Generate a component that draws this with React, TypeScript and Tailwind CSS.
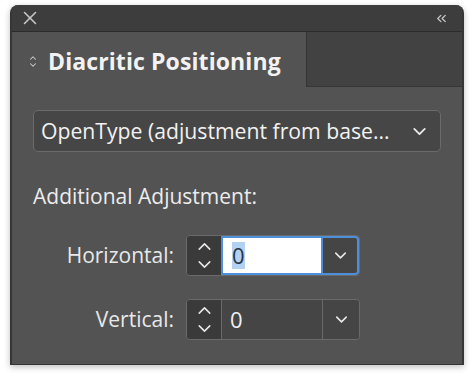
import { ChevronDown, ChevronUp, ChevronsLeft, X } from "lucide-react";

type SpinFieldProps = {
  label: string;
  value: string;
  focused?: boolean;
};

function SpinField({ label, value, focused }: SpinFieldProps) {
  return (
    <div className="flex items-center">
      <span className="w-[153px] pr-[12px] text-right text-[21px] leading-none text-[#e8e8e8]">{label}</span>
      <div className="flex h-[41px] w-[174px] overflow-hidden rounded-[4px] border border-[#6a6a6a]">
        <div className="flex w-[34px] flex-col items-center justify-center bg-[#3a3a3a] text-[#e6e6e6]">
          <ChevronUp size={21} strokeWidth={1.8} className="-mb-[3px]" />
          <ChevronDown size={21} strokeWidth={1.8} />
        </div>
        {focused ? (
          <div className="flex w-[102px] items-center border-2 border-[#4e8fdb] bg-white pl-[9px] text-[22px] text-[#283544]">
            <span className="bg-[#b3d1f2] leading-[27px]">{value}</span>
          </div>
        ) : (
          <div className="flex w-[102px] items-center border-x border-[#6a6a6a] bg-[#454545] pl-[8px] text-[22px] text-[#f0f0f0]">
            {value}
          </div>
        )}
        <div
          className={
            focused
              ? "flex flex-1 items-center justify-center rounded-r-[4px] border-y-2 border-r-2 border-[#4e8fdb] bg-[#454545] text-[#e6e6e6]"
              : "flex flex-1 items-center justify-center bg-[#454545] text-[#e6e6e6]"
          }
        >
          <ChevronDown size={19} strokeWidth={2} />
        </div>
      </div>
    </div>
  );
}

export default function App() {
  return (
    <div className="h-[382px] w-[474px] bg-white pl-[10px] pt-[5px] font-['Open_Sans',sans-serif]">
      <div className="flex h-[360px] w-[454px] flex-col overflow-hidden rounded-t-[8px] border-x-2 border-b border-[#363636] bg-[#535353] shadow-[0_2px_6px_rgba(0,0,0,0.25)]">
        <div className="flex h-[27px] shrink-0 items-center justify-between border-b border-[#2c2c2c] bg-[#3d3d3d] pl-[7px] pr-[13px] text-[#c8c8c8]">
          <X size={22} strokeWidth={1.7} />
          <ChevronsLeft size={15} strokeWidth={2.2} className="text-[#c4c4c4]" />
        </div>
        <div className="flex h-[55px] shrink-0">
          <div className="flex w-[294px] items-center gap-[10px] bg-[#535353] pl-[16px] pt-[3px]">
            <div className="flex flex-col items-center text-[#cfcfcf]">
              <ChevronUp size={10} strokeWidth={2.5} className="-mb-[3px]" />
              <ChevronDown size={10} strokeWidth={2.5} />
            </div>
            <span className="text-[23px] font-bold tracking-[0.1px] text-[#f2f2f2]">Diacritic Positioning</span>
          </div>
          <div className="flex-1 border-b border-l border-[#353535] bg-[#424242]" />
        </div>
        <div className="flex flex-col px-[21px] pt-[23px]">
          <div className="flex h-[42px] items-center justify-between rounded-[5px] border border-[#6b6b6b] bg-[#464646] pl-[7px] pr-[10px]">
            <span className="text-[21.2px] text-[#f2f2f2]">OpenType (adjustment from base...</span>
            <ChevronDown size={21} strokeWidth={2} className="text-[#ececec]" />
          </div>
          <div className="mt-[30px] text-[21px] leading-[28px] text-[#ececec]">Additional Adjustment:</div>
          <div className="mt-[25px] flex flex-col gap-[23px]">
            <SpinField label="Horizontal:" value="0" focused />
            <SpinField label="Vertical:" value="0" />
          </div>
        </div>
      </div>
    </div>
  );
}
